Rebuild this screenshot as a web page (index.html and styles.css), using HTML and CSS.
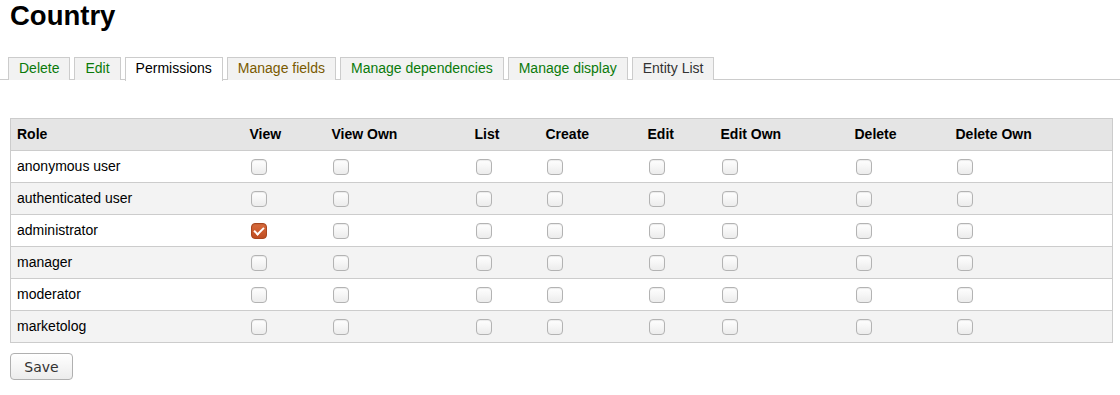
FILE: index.html
```html
<!DOCTYPE html>
<html lang="en">
<head>
    <meta charset="UTF-8">
    <title>Country</title>
    <link rel="stylesheet" href="styles.css">
</head>
<body>
    <h1 class="page-title">Country</h1>

    <ul class="tabs">
        <li><a href="#" class="link">Delete</a></li>
        <li><a href="#" class="link">Edit</a></li>
        <li class="active"><a href="#">Permissions</a></li>
        <li><a href="#" class="visited">Manage fields</a></li>
        <li><a href="#" class="link">Manage dependencies</a></li>
        <li><a href="#" class="link">Manage display</a></li>
        <li><a href="#" class="plain">Entity List</a></li>
    </ul>

    <form class="perm-form">
        <table class="perm-table">
            <colgroup>
                <col style="width: 233px">
                <col style="width: 82px">
                <col style="width: 143px">
                <col style="width: 71px">
                <col style="width: 102px">
                <col style="width: 73px">
                <col style="width: 134px">
                <col style="width: 101px">
                <col style="width: 163px">
            </colgroup>
            <thead>
                <tr>
                    <th>Role</th>
                    <th>View</th>
                    <th>View Own</th>
                    <th>List</th>
                    <th>Create</th>
                    <th>Edit</th>
                    <th>Edit Own</th>
                    <th>Delete</th>
                    <th>Delete Own</th>
                </tr>
            </thead>
            <tbody id="permRows">
                <!-- rows are filled in by the script -->
            </tbody>
        </table>
        <button type="button" class="btn-save">Save</button>
    </form>

    <script>
        // Roles and which permissions they have
        const roles = [
            { name: 'anonymous user', checked: [] },
            { name: 'authenticated user', checked: [] },
            { name: 'administrator', checked: [0] },
            { name: 'manager', checked: [] },
            { name: 'moderator', checked: [] },
            { name: 'marketolog', checked: [] }
        ];
        const columnCount = 8;
        const tbody = document.getElementById('permRows');

        roles.forEach((role) => {
            const row = document.createElement('tr');
            let cells = `<td>${role.name}</td>`;
            for (let i = 0; i < columnCount; i++) {
                const on = role.checked.includes(i) ? ' checked' : '';
                cells += `<td><input type="checkbox" class="cb"${on}></td>`;
            }
            row.innerHTML = cells;
            tbody.appendChild(row);
        });
    </script>
</body>
</html>
```

FILE: styles.css
```css
body {
    margin: 0;
    padding: 0;
    font-family: "Liberation Sans", Arial, sans-serif;
    font-size: 14px;
    color: #000;
    background: #fff;
}

.page-title {
    margin: 0;
    padding: 0 10px;
    font-size: 27.5px;
    line-height: 32px;
    font-weight: bold;
}

.tabs {
    list-style: none;
    display: flex;
    gap: 4px;
    margin: 25px 0 0 0;
    padding: 0 0 0 8px;
    border-bottom: 1px solid #ccc;
    height: 22px;
}

.tabs li {
    background: #f2f2f2;
    border: 1px solid #ccc;
    border-bottom: none;
    height: 22px;
}

.tabs a {
    display: block;
    padding: 0 10px;
    line-height: 21px;
    text-decoration: none;
}

.tabs li.active {
    background: #fff;
    height: 23px;
}

.tabs li.active a {
    color: #000;
}

.tabs a.link {
    color: #0a7a0a;
}

.tabs a.visited {
    color: #7a5a00;
}

.tabs a.plain {
    color: #333;
}

.perm-form {
    padding: 38px 8px 0 10px;
}

.perm-table {
    table-layout: fixed;
    border-collapse: collapse;
    width: 1103px;
    border: 1px solid #ccc;
}

.perm-table th {
    background: #e5e5e5;
    text-align: left;
    font-weight: bold;
    height: 29px;
    padding: 0 7px 2px 6px;
    border-bottom: 1px solid #ccc;
}

.perm-table td {
    height: 29px;
    padding: 0 7px 2px 6px;
    border-bottom: 1px solid #ccc;
}

.perm-table tbody tr:nth-child(even) td {
    background: #f3f3f3;
}

.cb {
    -webkit-appearance: none;
    appearance: none;
    position: relative;
    display: block;
    width: 16px;
    height: 16px;
    margin: 2px 0 0 1px;
    border: 1px solid #b3b3b3;
    border-radius: 4px;
    background: linear-gradient(#fff, #ececec);
    box-shadow: inset 0 1px 1px rgba(0,0,0,0.08);
}

.cb:checked {
    background: linear-gradient(#d96b3c, #bf4d22);
    border-color: #a8461f;
}

.cb:checked::after {
    content: "";
    position: absolute;
    left: 4px;
    top: 1px;
    width: 4px;
    height: 8px;
    border: solid #fff;
    border-width: 0 2px 2px 0;
    transform: rotate(45deg);
}

.btn-save {
    display: block;
    margin-top: 10px;
    width: 63px;
    height: 27px;
    padding: 0;
    font-family: "DejaVu Sans", sans-serif;
    font-size: 14px;
    color: #333;
    border: 1px solid #b0b0b0;
    border-radius: 4px;
    background: linear-gradient(#fff, #ececec);
    cursor: pointer;
}
```
